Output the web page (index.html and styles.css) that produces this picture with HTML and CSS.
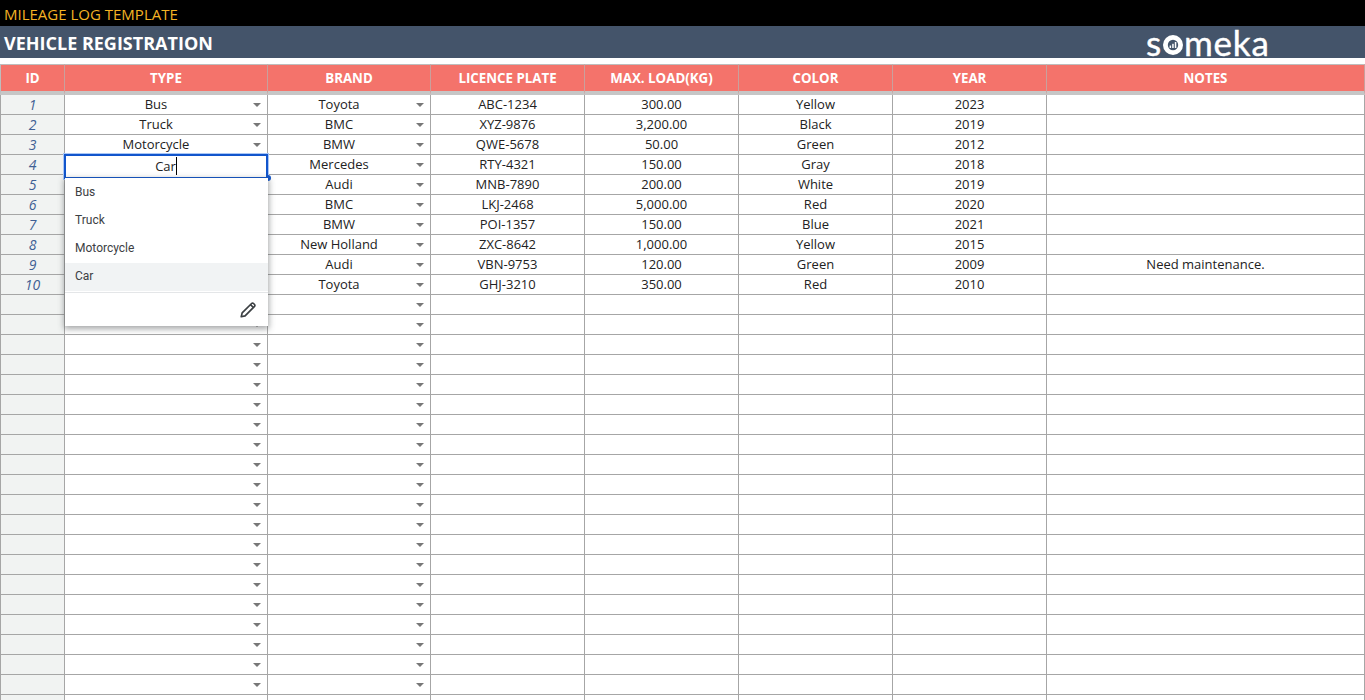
FILE: index.html
```html
<!DOCTYPE html>
<html lang="en">
<head>
<meta charset="utf-8">
<title>Mileage Log Template</title>
<link rel="stylesheet" href="styles.css">
</head>
<body>
<header class="topbar">MILEAGE LOG TEMPLATE</header>
<div class="titlebar">
  <h1 class="title">VEHICLE REGISTRATION</h1>
  <div class="logo">s<svg class="logo-o" viewBox="0 0 20 20" aria-hidden="true"><circle cx="10" cy="10" r="10" fill="#fff"/><circle cx="10" cy="10" r="5.2" fill="#44546a"/><rect x="6.6" y="10.5" width="1.5" height="2.5" fill="#fff"/><rect x="9.2" y="8.8" width="1.5" height="4.2" fill="#fff"/><rect x="11.8" y="7" width="1.5" height="6" fill="#fff"/></svg>meka</div>
</div>
<main class="sheet">
<table class="grid">
<colgroup><col class="c-id"><col class="c-type"><col class="c-brand"><col class="c-std"><col class="c-std"><col class="c-std"><col class="c-std"><col class="c-notes"></colgroup>
<thead><tr><th>ID</th><th>TYPE</th><th>BRAND</th><th>LICENCE PLATE</th><th>MAX. LOAD(KG)</th><th>COLOR</th><th>YEAR</th><th>NOTES</th></tr></thead>
<tbody>
<tr><td class="id">1</td><td class="dd">Bus</td><td class="dd">Toyota</td><td>ABC-1234</td><td>300.00</td><td>Yellow</td><td>2023</td><td></td></tr>
<tr><td class="id">2</td><td class="dd">Truck</td><td class="dd">BMC</td><td>XYZ-9876</td><td>3,200.00</td><td>Black</td><td>2019</td><td></td></tr>
<tr><td class="id">3</td><td class="dd">Motorcycle</td><td class="dd">BMW</td><td>QWE-5678</td><td>50.00</td><td>Green</td><td>2012</td><td></td></tr>
<tr><td class="id">4</td><td class="dd"></td><td class="dd">Mercedes</td><td>RTY-4321</td><td>150.00</td><td>Gray</td><td>2018</td><td></td></tr>
<tr><td class="id">5</td><td class="dd"></td><td class="dd">Audi</td><td>MNB-7890</td><td>200.00</td><td>White</td><td>2019</td><td></td></tr>
<tr><td class="id">6</td><td class="dd"></td><td class="dd">BMC</td><td>LKJ-2468</td><td>5,000.00</td><td>Red</td><td>2020</td><td></td></tr>
<tr><td class="id">7</td><td class="dd"></td><td class="dd">BMW</td><td>POI-1357</td><td>150.00</td><td>Blue</td><td>2021</td><td></td></tr>
<tr><td class="id">8</td><td class="dd"></td><td class="dd">New Holland</td><td>ZXC-8642</td><td>1,000.00</td><td>Yellow</td><td>2015</td><td></td></tr>
<tr><td class="id">9</td><td class="dd"></td><td class="dd">Audi</td><td>VBN-9753</td><td>120.00</td><td>Green</td><td>2009</td><td>Need maintenance.</td></tr>
<tr><td class="id">10</td><td class="dd"></td><td class="dd">Toyota</td><td>GHJ-3210</td><td>350.00</td><td>Red</td><td>2010</td><td></td></tr>
<tr><td class="id"></td><td class="dd"></td><td class="dd"></td><td></td><td></td><td></td><td></td><td></td></tr>
<tr><td class="id"></td><td class="dd"></td><td class="dd"></td><td></td><td></td><td></td><td></td><td></td></tr>
<tr><td class="id"></td><td class="dd"></td><td class="dd"></td><td></td><td></td><td></td><td></td><td></td></tr>
<tr><td class="id"></td><td class="dd"></td><td class="dd"></td><td></td><td></td><td></td><td></td><td></td></tr>
<tr><td class="id"></td><td class="dd"></td><td class="dd"></td><td></td><td></td><td></td><td></td><td></td></tr>
<tr><td class="id"></td><td class="dd"></td><td class="dd"></td><td></td><td></td><td></td><td></td><td></td></tr>
<tr><td class="id"></td><td class="dd"></td><td class="dd"></td><td></td><td></td><td></td><td></td><td></td></tr>
<tr><td class="id"></td><td class="dd"></td><td class="dd"></td><td></td><td></td><td></td><td></td><td></td></tr>
<tr><td class="id"></td><td class="dd"></td><td class="dd"></td><td></td><td></td><td></td><td></td><td></td></tr>
<tr><td class="id"></td><td class="dd"></td><td class="dd"></td><td></td><td></td><td></td><td></td><td></td></tr>
<tr><td class="id"></td><td class="dd"></td><td class="dd"></td><td></td><td></td><td></td><td></td><td></td></tr>
<tr><td class="id"></td><td class="dd"></td><td class="dd"></td><td></td><td></td><td></td><td></td><td></td></tr>
<tr><td class="id"></td><td class="dd"></td><td class="dd"></td><td></td><td></td><td></td><td></td><td></td></tr>
<tr><td class="id"></td><td class="dd"></td><td class="dd"></td><td></td><td></td><td></td><td></td><td></td></tr>
<tr><td class="id"></td><td class="dd"></td><td class="dd"></td><td></td><td></td><td></td><td></td><td></td></tr>
<tr><td class="id"></td><td class="dd"></td><td class="dd"></td><td></td><td></td><td></td><td></td><td></td></tr>
<tr><td class="id"></td><td class="dd"></td><td class="dd"></td><td></td><td></td><td></td><td></td><td></td></tr>
<tr><td class="id"></td><td class="dd"></td><td class="dd"></td><td></td><td></td><td></td><td></td><td></td></tr>
<tr><td class="id"></td><td class="dd"></td><td class="dd"></td><td></td><td></td><td></td><td></td><td></td></tr>
<tr><td class="id"></td><td class="dd"></td><td class="dd"></td><td></td><td></td><td></td><td></td><td></td></tr>
<tr><td class="id"></td><td class="dd"></td><td class="dd"></td><td></td><td></td><td></td><td></td><td></td></tr>
</tbody>
</table>
<div class="editor"><span class="editor-text">Car</span><span class="handle"></span></div>
<div class="menu">
  <ul class="menu-list">
    <li class="menu-item">Bus</li>
    <li class="menu-item">Truck</li>
    <li class="menu-item">Motorcycle</li>
    <li class="menu-item is-active">Car</li>
  </ul>
  <div class="menu-foot">
    <svg class="pencil" viewBox="0 0 16 16" aria-hidden="true"><path d="M2 14l.8-3.4L11.2 2.2a1.2 1.2 0 0 1 1.7 0l.9.9a1.2 1.2 0 0 1 0 1.7L5.4 13.2z" fill="none" stroke="#3c4043" stroke-width="1.5" stroke-linejoin="round"/><path d="M10.2 3.2l2.6 2.6" fill="none" stroke="#3c4043" stroke-width="1.5"/></svg>
  </div>
</div>
</main>
</body>
</html>
```
FILE: styles.css
```css
* { box-sizing: border-box; }
html, body { margin: 0; height: 700px; overflow: hidden; background: #fff; }
body { font-family: "Open Sans", "Liberation Sans", sans-serif; color: #222; }

.topbar {
  height: 26px;
  padding: 4px 0 0 4px;
  background: #000;
  color: #f5b324;
  font-size: 15px;
  line-height: 20px;
}

.titlebar {
  height: 32px;
  display: flex;
  justify-content: space-between;
  align-items: center;
  background: #44546a;
  color: #fff;
}
.title { margin: 0; padding: 2px 0 0 4px; font-size: 18px; font-weight: 700; line-height: 30px; }

.logo {
  display: flex;
  align-items: center;
  width: 219px;
  font-family: Lato, "Open Sans", sans-serif;
  font-size: 35px;
  font-weight: 400;
  line-height: 30px;
  letter-spacing: .8px;
  color: #fff;
  -webkit-text-stroke: .4px #fff;
}
.logo-o { width: 20px; height: 20px; margin: 6px 1px 0 1px; }

.sheet { position: relative; margin-top: 6px; }

.grid { width: 1365px; table-layout: fixed; border-collapse: separate; border-spacing: 0; font-size: 13px; }
.c-id { width: 65px; }
.c-type { width: 203px; }
.c-brand { width: 163px; }
.c-std { width: 154px; }
.c-notes { width: 318px; }

.grid th {
  height: 31px;
  padding: 0;
  background: #f4736b;
  color: #fff;
  font-size: 13.3px;
  font-weight: 700;
  border-top: 1px solid #bdbdbd;
  border-right: 1px solid #c9a09c;
  border-bottom: 4px solid #c6c6c6;
  line-height: 25px;
}
.grid th:first-child { border-left: 1px solid #bdbdbd; }

.grid td {
  position: relative;
  height: 20px;
  padding: 0;
  text-align: center;
  line-height: 19px;
  white-space: nowrap;
  border-right: 1px solid #a6a6a6;
  border-bottom: 1px solid #a6a6a6;
}
.grid td.id {
  background: #f1f3f2;
  color: #3f5f94;
  font-style: italic;
  border-left: 1px solid #a6a6a6;
  font-size: 14px;
}
.grid td.dd { padding-right: 20px; }
.grid td.dd::after {
  content: "";
  position: absolute;
  top: 8px;
  right: 6px;
  border-style: solid;
  border-width: 4px 4px 0;
  border-color: #777 transparent transparent;
}

.editor {
  position: absolute;
  left: 64px;
  top: 90px;
  width: 204px;
  height: 25px;
  text-align: center;
  background: #fff;
  border: 2px solid #1155cc;
  box-shadow: 0 0 0 1px #a9c6f5;
  font-size: 13px;
  line-height: 21px;
}
.editor-text { border-right: 1px solid #000; }
.handle {
  position: absolute;
  right: -5px;
  bottom: -4px;
  width: 5px;
  height: 6px;
  border-radius: 0 3px 3px 0;
  background: #1155cc;
}

.menu {
  position: absolute;
  left: 65px;
  top: 114px;
  width: 203px;
  height: 148px;
  background: #fff;
  box-shadow: 0 2px 6px 1px rgba(60, 64, 67, .45);
  font-family: Roboto, Arial, sans-serif;
  font-size: 12px;
  color: #3c4043;
}
.menu-list { list-style: none; margin: 0; padding: 1px 0 0; }
.menu-item { height: 28px; padding-left: 10px; line-height: 27px; }
.is-active { background: #f1f3f4; }
.menu-foot {
  display: flex;
  justify-content: flex-end;
  margin-top: 1px;
  padding: 8px 11px 0 0;
  border-top: 1px solid #e4e6e8;
}
.pencil { width: 18px; height: 18px; }
```
